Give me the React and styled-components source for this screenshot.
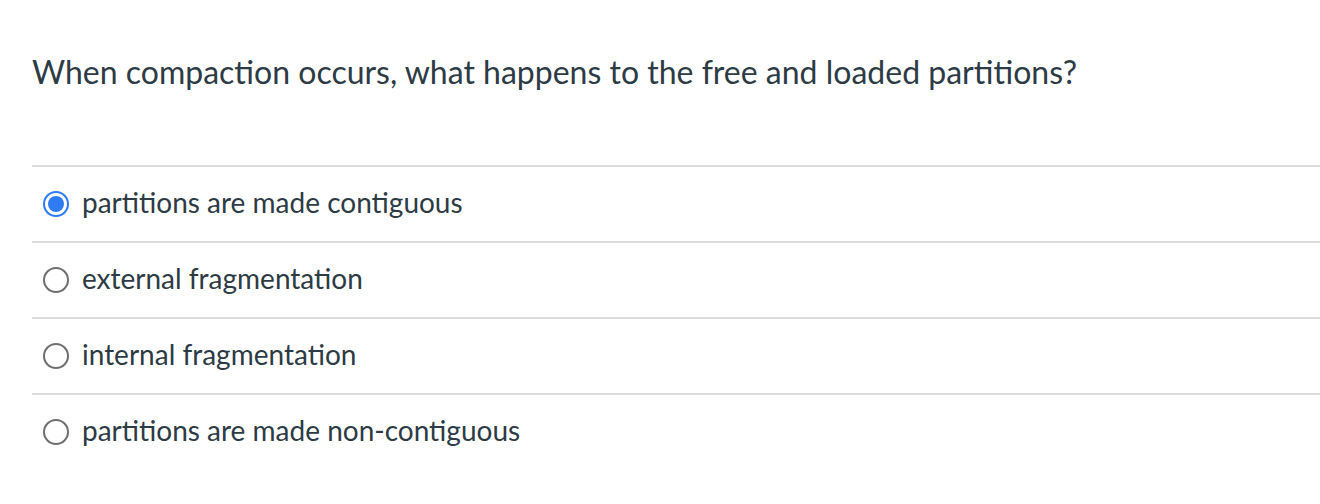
import React, { useState } from 'react';
import styled, { createGlobalStyle } from 'styled-components';

const GlobalStyle = createGlobalStyle`
  body {
    margin: 0;
    background: #ffffff;
    font-family: Lato, "Noto Sans", sans-serif;
    color: #2d3b45;
  }
`;

const Wrapper = styled.div`
  padding: 52px 0 0 32px;
`;

const Question = styled.h2`
  margin: 0 0 73px;
  font-size: 32px;
  line-height: 40px;
  font-weight: normal;
`;

const Answers = styled.div`
  display: flex;
  flex-direction: column;
`;

const Row = styled.label`
  box-sizing: border-box;
  height: 76px;
  display: flex;
  align-items: center;
  gap: 13px;
  padding: 0 0 4px 11px;
  border-top: 2px solid #dddddd;
  font-size: 28px;
  cursor: pointer;
`;

const Radio = styled.span`
  box-sizing: border-box;
  width: 26px;
  height: 26px;
  margin-top: 4px;
  border-radius: 50%;
  flex-shrink: 0;
  border: ${({ $checked }) => ($checked ? '2px solid #2e7bf3' : '2px solid #6e6e6e')};
  display: flex;
  align-items: center;
  justify-content: center;

  &::after {
    content: '';
    width: 16px;
    height: 16px;
    border-radius: 50%;
    background: ${({ $checked }) => ($checked ? '#2e7bf3' : 'transparent')};
  }
`;

const answers = [
  'partitions are made contiguous',
  'external fragmentation',
  'internal fragmentation',
  'partitions are made non-contiguous',
];

const App = () => {
  const [picked, setPicked] = useState(0);

  return (
    <Wrapper>
      <GlobalStyle />
      <Question>When compaction occurs, what happens to the free and loaded partitions?</Question>
      <Answers>
        {answers.map((a, i) => (
          <Row key={a} onClick={() => setPicked(i)}>
            <Radio $checked={picked === i} />
            {a}
          </Row>
        ))}
      </Answers>
    </Wrapper>
  );
};

export default App;
